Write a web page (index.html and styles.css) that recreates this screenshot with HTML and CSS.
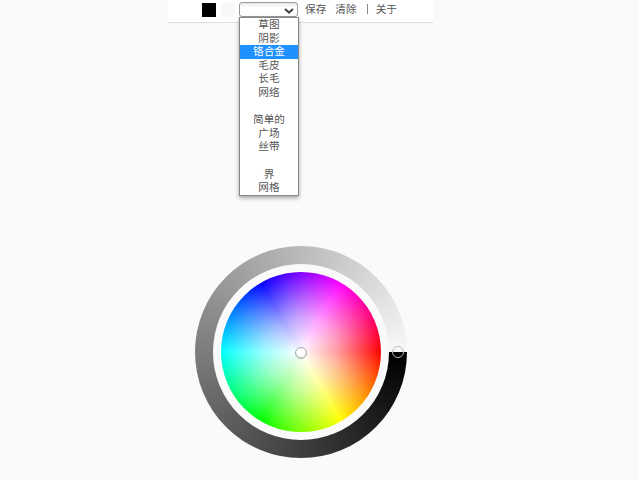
FILE: index.html
```html
<!DOCTYPE html>
<html lang="zh">
<head>
    <meta charset="UTF-8" />
    <meta name="viewport" content="width=device-width, initial-scale=1.0" />
    <title>Harmony</title>
    <link rel="stylesheet" href="styles.css">
</head>
<body>
    <div class="toolbar">
        <span class="swatch swatch-black"></span>
        <span class="swatch swatch-white"></span>
        <div class="brush">
            <select class="brush-select" aria-label="brush"><option></option></select>
            <svg class="brush-arrow" width="10" height="6" viewBox="0 0 10 6"><path d="M1 1 L5 4.6 L9 1" fill="none" stroke="#444" stroke-width="2"/></svg>
            <ul class="brush-list">
                <li>草图</li>
                <li>阴影</li>
                <li class="selected">铬合金</li>
                <li>毛皮</li>
                <li>长毛</li>
                <li>网络</li>
                <li></li>
                <li>简单的</li>
                <li>广场</li>
                <li>丝带</li>
                <li></li>
                <li>界</li>
                <li>网格</li>
            </ul>
        </div>
        <span class="menu-item first">保存</span>
        <span class="menu-item">清除</span>
        <span class="menu-sep"></span>
        <span class="menu-item">关于</span>
    </div>

    <div class="palette">
        <div class="ring">
            <div class="ring-hole">
                <div class="wheel"></div>
            </div>
            <span class="handle handle-wheel"></span>
            <span class="handle handle-ring"></span>
        </div>
    </div>
</body>
</html>
```

FILE: styles.css
```css
body {
    margin: 0;
    height: 480px;
    overflow: hidden;
    background-color: #fafafa;
    color: #555;
    font-family: "Noto Sans CJK SC", "Liberation Sans", sans-serif;
    font-size: 10.67px;
}

.toolbar {
    width: 265px;
    height: 23px;
    margin-left: 168px;
    padding: 2px 0 0 34px;
    box-sizing: border-box;
    display: flex;
    align-items: flex-start;
    background-color: #fff;
    border-bottom: 1px solid #e0e0e0;
}

.swatch {
    width: 14px;
    height: 14px;
    margin-top: 1px;
}
.swatch-black {
    margin-right: 5px;
    background-color: #000;
}
.swatch-white {
    margin-right: 4px;
    background-color: #f8f8f8;
}

.brush {
    position: relative;
    width: 59px;
    height: 15px;
}

.brush-select {
    display: block;
    width: 59px;
    height: 15px;
    padding: 0;
    appearance: none;
    background: linear-gradient(#e8e8e8, #fff 35%);
    border: 1px solid #999;
    border-radius: 3px;
}

.brush-arrow {
    position: absolute;
    top: 6px;
    right: 4px;
}

.brush-list {
    position: absolute;
    top: 15px;
    left: 0;
    z-index: 10;
    width: 60px;
    margin: 0;
    padding: 0;
    box-sizing: border-box;
    list-style: none;
    text-align: center;
    background-color: #fff;
    border: 1px solid #888;
    box-shadow: 0 2px 4px rgba(0, 0, 0, 0.35);
}

.brush-list li {
    height: 13.6px;
    line-height: 12px;
}

.brush-list .selected {
    background-color: #1e90ff;
    color: #fff;
}

.menu-item {
    margin-right: 9px;
    line-height: 14px;
}
.menu-item.first { margin-left: 7px; }

.menu-sep {
    width: 1px;
    height: 10px;
    margin: 2px 8px 0 1px;
    background-color: #888;
}

.palette {
    display: flex;
    justify-content: flex-start;
    padding: 223px 0 0 195px;
}

.ring {
    position: relative;
    width: 212px;
    height: 212px;
    padding: 18px;
    box-sizing: border-box;
    border-radius: 50%;
    background: conic-gradient(from 90deg, #000, #f8f8f8);
}

.ring-hole {
    height: 100%;
    padding: 8px;
    box-sizing: border-box;
    border-radius: 50%;
    background-color: #fafafa;
}

.wheel {
    height: 100%;
    border-radius: 50%;
    background:
        radial-gradient(circle closest-side, #fff, rgba(255, 255, 255, 0.62) 45%, rgba(255, 255, 255, 0)),
        conic-gradient(from 90deg, #f00, #ff0, #0f0, #0ff, #00f, #f0f, #f00);
}

.handle {
    position: absolute;
    width: 12px;
    height: 12px;
    box-sizing: border-box;
    border: 1.5px solid #aaa;
    border-radius: 50%;
    background-color: rgba(255, 255, 255, 0.9);
    box-shadow: inset 0 -1px 1px rgba(0, 0, 0, 0.2);
}
.handle-wheel { left: 100px; top: 101px; }
.handle-ring { left: 197px; top: 100px; background-color: transparent; border-color: #bbb; }
```
